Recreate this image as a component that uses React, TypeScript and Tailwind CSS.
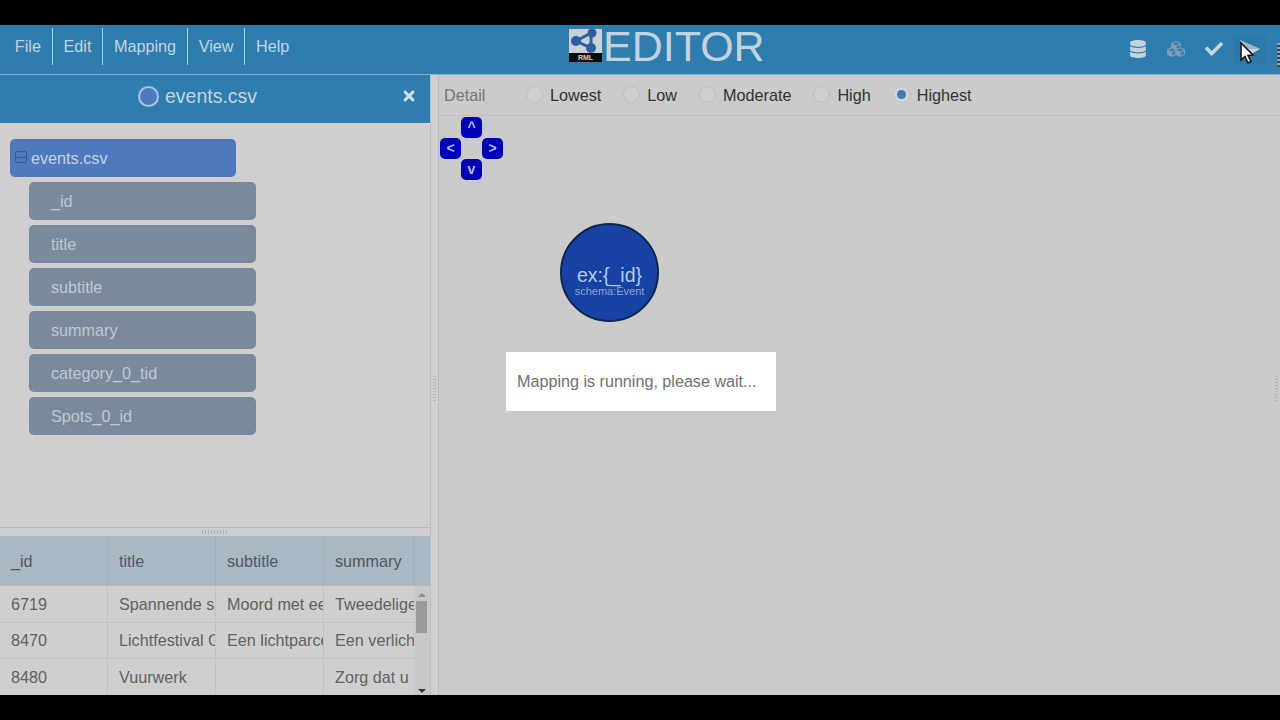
import { FC } from "react";
import { FaCheck, FaCubes, FaDatabase, FaTimes } from "react-icons/fa";

const font = { fontFamily: '"Liberation Sans", Arial, sans-serif' };

const menuItems = ["File", "Edit", "Mapping", "View", "Help"];
const fields = ["_id", "title", "subtitle", "summary", "category_0_tid", "Spots_0_id"];
const levels = ["Lowest", "Low", "Moderate", "High", "Highest"];
const columns = ["_id", "title", "subtitle", "summary"];
const rows = [
  ["6719", "Spannende s", "Moord met ee", "Tweedelige"],
  ["8470", "Lichtfestival G", "Een lichtparce", "Een verlich"],
  ["8480", "Vuurwerk", "", "Zorg dat u"],
];

const Logo: FC = () => (
  <svg width="33" height="33" viewBox="0 0 33 33" className="shrink-0">
    <rect width="33" height="33" fill="#c9d0d6" />
    <rect y="24" width="33" height="9" fill="#0b0b0b" />
    <path d="M7 12 L22 4 L22 19 Z" fill="none" stroke="#2c5f9e" strokeWidth="3" />
    <circle cx="7" cy="12" r="5" fill="#2c5f9e" />
    <circle cx="23" cy="4" r="4.5" fill="#2c5f9e" />
    <circle cx="22" cy="19" r="5" fill="#2c5f9e" />
    <text x="16.5" y="31" textAnchor="middle" fontSize="7" fontWeight="700" fill="#d0d0d0">
      RML
    </text>
  </svg>
);

const Header: FC = () => (
  <header className="relative flex h-[50px] shrink-0 items-center justify-between border-b border-[#7fb0cf] bg-[#2f7dae]">
    <nav className="flex items-center pb-[6px] pl-[4px]">
      {menuItems.map((item, i) => (
        <div
          key={item}
          className={`flex h-[37px] items-center px-[10.8px] text-[16.2px] text-[#c3d4e0] ${
            i < menuItems.length - 1 ? "border-r border-[#a9cde3]" : ""
          }`}
        >
          {item}
        </div>
      ))}
    </nav>
    <div className="absolute left-[569px] top-[4px] flex items-start">
      <Logo />
      <span className="-mt-[1px] ml-[1px] text-[43px] leading-[36px] text-[#c3d3de]">EDITOR</span>
    </div>
    <div className="flex items-center pb-[2px] pr-[9px]">
      <div className="flex w-[38px] justify-center">
        <FaDatabase className="size-[18px] text-[#c3d4e0]" />
      </div>
      <div className="flex w-[38px] justify-center">
        <FaCubes className="size-[18px] text-[#7f9db3]" />
      </div>
      <div className="flex w-[38px] justify-center">
        <FaCheck className="size-[18px] text-[#c3d4e0]" />
      </div>
      <div className="mr-[4px] flex h-[30px] w-[34px] items-center justify-center rounded-sm bg-[#2b78a9]">
        <svg width="22" height="20" viewBox="0 0 22 20">
          <path d="M1 1 L21 10 L5 19 L8 10 Z" fill="#c9d8e3" />
          <path d="M1 1 L21 10 L8 10 Z" fill="#9fb4c4" />
        </svg>
      </div>
    </div>
    <div className="absolute right-0 top-[18px] h-[24px] w-[3px] bg-[repeating-linear-gradient(0deg,#2a4a60_0,#2a4a60_2px,#8fa5b4_2px,#8fa5b4_4px)]" />
  </header>
);

const TreePanel: FC = () => (
  <div className="min-h-0 flex-1 pl-[10px] pt-[16px]">
    <div className="flex h-[38px] w-[226px] items-center gap-[1px] rounded-[5px] bg-[#4f79bc] pl-[5px] pt-[1px] text-[16.2px] text-[#c4d1e4]">
      <span className="mb-[3px] flex h-[12px] w-[12px] items-center rounded-[2px] border border-[#3a5a92]">
        <span className="h-px w-full bg-[#3a5a92]" />
      </span>
      <span className="ml-[3px]">events.csv</span>
    </div>
    <div className="ml-[19px] mt-[5px] flex flex-col gap-[5px]">
      {fields.map((field) => (
        <div
          key={field}
          className="flex h-[38px] w-[227px] items-center rounded-[5px] bg-[#7a8a9c] pl-[22px] pt-[1px] text-[16.2px] text-[#c0c9d3]"
        >
          {field}
        </div>
      ))}
    </div>
  </div>
);

const DataTable: FC = () => (
  <div className="relative h-[168px] shrink-0 overflow-hidden border-t border-[#b9b9b9]">
    <div className="flex h-[8px] items-center justify-center">
      <div className="h-[4px] w-[26px] bg-[repeating-linear-gradient(90deg,#b0b0b0_0,#b0b0b0_1px,transparent_1px,transparent_3px)]" />
    </div>
    <div className="flex h-[50px] border-b border-[#bdbdbd] bg-[#a9b8c2]">
      {columns.map((col, i) => (
        <div
          key={col}
          className={`flex h-full items-center border-r border-[#9fb0bd] pl-[11px] pt-[1px] text-[16.2px] text-[#4f5a62] ${
            i === 3 ? "w-[90px]" : "w-[108px]"
          }`}
        >
          {col}
        </div>
      ))}
    </div>
    <div className="flex">
      <div className="w-[414px] shrink-0">
        {rows.map((row) => (
          <div key={row[0]} className="flex h-[36.5px] border-b border-[#c2c2c2]">
            {row.map((cell, i) => (
              <div
                key={i}
                className={`flex h-full items-center overflow-hidden whitespace-nowrap pl-[11px] text-[16.2px] text-[#626262] ${
                  i === 3 ? "w-[90px]" : "w-[108px] border-r border-[#c2c2c2]"
                }`}
              >
                {cell}
              </div>
            ))}
          </div>
        ))}
      </div>
      <div className="relative h-[110px] w-[16px] bg-[#c9c9c9]">
        <div className="absolute left-[4px] top-[7px] size-0 border-x-[4px] border-b-[4px] border-x-transparent border-b-[#8d8d8d]" />
        <div className="absolute left-[2px] top-[15px] h-[32px] w-[11px] bg-[#9a9a9a]" />
        <div className="absolute bottom-[3px] left-[4px] size-0 border-x-[4px] border-t-[4px] border-x-transparent border-t-[#333333]" />
      </div>
    </div>
  </div>
);

const LeftPane: FC = () => (
  <aside className="flex h-full w-[430px] shrink-0 flex-col bg-[#cfcfcf]">
    <div className="relative flex h-[48px] shrink-0 items-center justify-center bg-[#2f7dae] pb-[5px] pr-[35px] text-[19.5px] text-[#c3d4e0]">
      <span className="mr-[6px] size-[21px] rounded-full border-2 border-[#a9c4dc] bg-[#4f79bc]" />
      events.csv
      <FaTimes className="absolute right-[13px] top-[13px] size-[16px] text-[#d5dfe6]" />
    </div>
    <TreePanel />
    <DataTable />
  </aside>
);

const DirButton: FC<{ label: string; className: string }> = ({ label, className }) => (
  <div
    className={`absolute flex size-[21px] items-center justify-center rounded-[5px] bg-[#0000b8] text-[14px] font-bold text-[#b6bcea] ${className}`}
  >
    {label}
  </div>
);

const Canvas: FC = () => (
  <main className="relative min-w-0 flex-1 border-l border-[#bcbcbc] bg-[#cbcbcb]">
    <div className="flex h-[41px] items-center border-b border-[#c0c0c0] pl-[5px]">
      <span className="w-[82px] text-[16.2px] text-[#757575]">Detail</span>
      {levels.map((level, i) => (
        <div key={level} className="mr-[22px] flex items-center gap-[7px] text-[16.2px] text-[#333333]">
          <span
            className={`flex size-[17px] items-center justify-center rounded-full border ${
              i === 4 ? "border-[#c4c4c4] bg-[#d4d4d4]" : "border-[#bebebe] bg-[#cfcfcf]"
            }`}
          >
            {i === 4 && <span className="size-[9px] rounded-full bg-[#3d7bb8]" />}
          </span>
          <span>{level}</span>
        </div>
      ))}
    </div>

    <DirButton label="^" className="left-[22px] top-[42px]" />
    <DirButton label="<" className="left-[1px] top-[63px]" />
    <DirButton label=">" className="left-[43px] top-[63px]" />
    <DirButton label="v" className="left-[22px] top-[84px]" />

    <div className="absolute left-[121px] top-[148px] flex size-[99px] flex-col items-center justify-center rounded-full border-2 border-[#10254f] bg-[#1643a3] text-[#bcc9e6]">
      <span className="mt-[16px] text-[19.5px] leading-[20px]">ex:{"{_id}"}</span>
      <span className="mt-[1px] text-[11px] leading-[11px] text-[#8ea2d0]">schema:Event</span>
    </div>

    <div className="absolute left-[67px] top-[277px] flex h-[59px] w-[270px] items-center bg-white pl-[11px] text-[16.15px] text-[#707070]">
      Mapping is running, please wait...
    </div>

    <div className="absolute right-[2px] top-[300px] h-[26px] w-[3px] bg-[repeating-linear-gradient(0deg,#b5b5b5_0,#b5b5b5_1px,transparent_1px,transparent_3px)]" />
  </main>
);

const Cursor: FC = () => (
  <svg width="16" height="24" viewBox="0 0 16 24" className="absolute left-[1239px] top-[42px]">
    <path
      d="M2 1 L2 18 L6 14.5 L9 21 L12 19.5 L9 13.5 L14 13 Z"
      fill="#ffffff"
      stroke="#111111"
      strokeWidth="1.5"
    />
  </svg>
);

const App: FC = () => (
  <div className="relative flex h-[720px] w-[1280px] flex-col overflow-hidden bg-black" style={font}>
    <div className="h-[25px] shrink-0" />
    <div className="flex h-[670px] shrink-0 flex-col bg-[#cccccc]">
      <Header />
      <div className="flex min-h-0 flex-1">
        <LeftPane />
        <div className="relative w-[8px] shrink-0 border-l border-[#bfbfbf] bg-[#d0d0d0]">
          <div className="absolute left-[2px] top-[300px] h-[26px] w-[3px] bg-[repeating-linear-gradient(0deg,#b5b5b5_0,#b5b5b5_1px,transparent_1px,transparent_3px)]" />
        </div>
        <Canvas />
      </div>
    </div>
    <div className="h-[25px] shrink-0" />
    <Cursor />
  </div>
);

export default App;
